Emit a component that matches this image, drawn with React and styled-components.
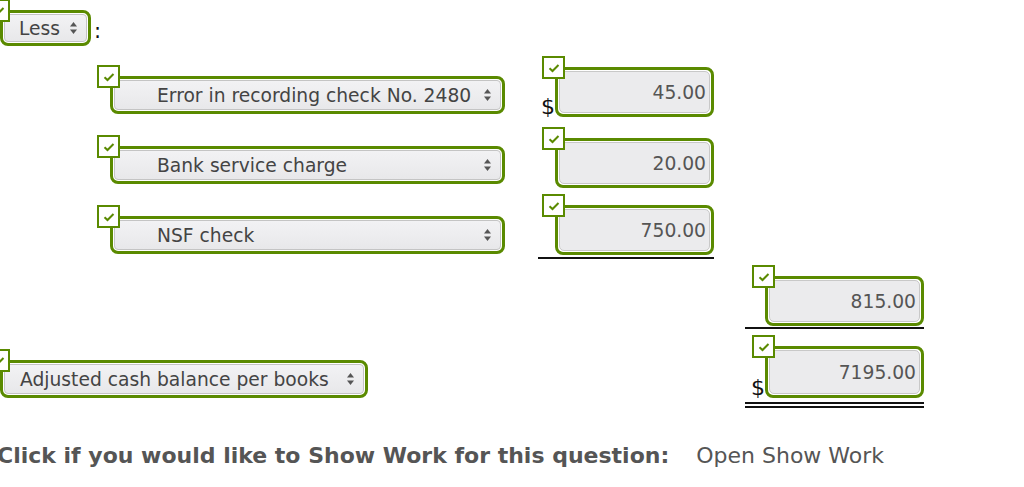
import React from "react";
import styled, { createGlobalStyle } from "styled-components";

const GREEN = "#5a8a00";

const Global = createGlobalStyle`
  html, body { margin: 0; padding: 0; background: #fff; overflow: hidden; }
  body { font-family: "DejaVu Sans", Verdana, sans-serif; color: #444; }
`;

const Page = styled.div`
  width: 1024px;
  height: 487px;
  position: relative;
  overflow: hidden;
  padding-top: 10px;
  box-sizing: border-box;
`;

const Row = styled.div`
  display: grid;
  grid-template-columns: 538px 207px 179px;
  align-items: ${(p) => p.$align || "center"};
  margin-top: ${(p) => p.$top || 0}px;
`;

const LessLine = styled.div`
  display: flex;
  align-items: flex-end;
  gap: 3px;
`;

const Colon = styled.span`
  font-size: 21px;
  color: #111;
  line-height: 1;
  padding-bottom: 4px;
`;

const Field = styled.div`
  position: relative;
  box-sizing: border-box;
  border: 3px solid ${GREEN};
  border-radius: 8px;
  background: #fff;
  padding: 1px;
  width: ${(p) => p.$w}px;
  height: ${(p) => p.$h}px;
  margin-left: ${(p) => p.$ml || 0}px;
  margin-top: ${(p) => p.$mt || 0}px;
  flex: none;
`;

const CheckBox = styled.span`
  position: absolute;
  left: -16px;
  top: -14px;
  width: 23px;
  height: 23px;
  box-sizing: border-box;
  border: 2px solid ${GREEN};
  background: #fff;
  display: flex;
  align-items: center;
  justify-content: center;
  z-index: 2;
`;

const SelectBox = styled.div`
  box-sizing: border-box;
  height: 100%;
  border: 1px solid #c4c4c4;
  border-radius: 4px;
  background: linear-gradient(#f2f2f4, #e8e8ea);
  display: flex;
  align-items: center;
  padding-left: ${(p) => p.$pl}px;
  padding-right: 8px;
  font-size: 18.7px;
  color: #444;
  white-space: nowrap;
`;

const SelectLabel = styled.span`
  flex: 1;
`;

const InputBox = styled.div`
  box-sizing: border-box;
  height: 100%;
  border: 1px solid #c8c8c8;
  border-radius: 5px;
  background: #ebebed;
  display: flex;
  align-items: center;
  justify-content: flex-end;
  padding-right: 3px;
  font-size: 18.7px;
  color: #555;
`;

const AmountCell = styled.div`
  display: flex;
  align-items: flex-end;
  justify-content: flex-end;
  box-sizing: border-box;
  width: ${(p) => p.$w}px;
  padding-bottom: ${(p) => p.$pb || 0}px;
  border-bottom: ${(p) =>
    p.$line === "double" ? "6px double #111" : p.$line === "single" ? "2px solid #111" : "none"};
`;

const Dollar = styled.span`
  font-size: 22px;
  color: #111;
  line-height: 1;
  margin-bottom: -1px;
`;

const Footer = styled.div`
  margin-top: 36px;
  display: flex;
  align-items: center;
  font-size: 22px;
  line-height: 24px;
  color: #555;
  margin-left: -3px;
  white-space: nowrap;
`;

const FooterBold = styled.span`
  font-weight: bold;
  margin-right: 27px;
`;

const FooterLink = styled.span``;

const Check = () => (
  <CheckBox>
    <svg width="12" height="10" viewBox="0 0 12 10">
      <path d="M1.5 5.2 L4.5 8 L10.5 2" fill="none" stroke={GREEN} strokeWidth="2" />
    </svg>
  </CheckBox>
);

const Arrows = () => (
  <svg width="9" height="14" viewBox="0 0 9 14">
    <path d="M4.5 1 L8 5.5 H1 Z" fill="#555" />
    <path d="M4.5 13 L8 8.5 H1 Z" fill="#555" />
  </svg>
);

const Select = ({ label, w, h = 38, pl, ml, mt }) => (
  <Field $w={w} $h={h} $ml={ml} $mt={mt}>
    <Check />
    <SelectBox $pl={pl}>
      <SelectLabel>{label}</SelectLabel>
      <Arrows />
    </SelectBox>
  </Field>
);

const Amount = ({ value, dollar, w, line, pb, h = 50 }) => (
  <AmountCell $w={w} $line={line} $pb={pb}>
    {dollar && <Dollar>$</Dollar>}
    <Field $w={159} $h={h}>
      <Check />
      <InputBox>{value}</InputBox>
    </Field>
  </AmountCell>
);

export default function App() {
  return (
    <Page>
      <Global />
      <LessLine>
        <Select label="Less" w={91} h={36} pl={14} />
        <Colon>:</Colon>
      </LessLine>

      <Row $top={21}>
        <Select label="Error in recording check No. 2480" w={395} pl={42} ml={110} mt={6} />
        <Amount value="45.00" dollar w={176} />
      </Row>

      <Row $top={21}>
        <Select label="Bank service charge" w={395} pl={42} ml={110} mt={4} />
        <Amount value="20.00" w={176} />
      </Row>

      <Row $top={17}>
        <Select label="NSF check" w={395} pl={42} ml={110} mt={6} />
        <Amount value="750.00" w={176} line="single" pb={2} />
      </Row>

      <Row $top={17}>
        <span />
        <span />
        <Amount value="815.00" w={179} line="single" pb={1} />
      </Row>

      <Row $top={17} $align="start">
        <Select label="Adjusted cash balance per books" w={368} pl={15} mt={14} />
        <span />
        <Amount value="7195.00" dollar w={179} line="double" pb={4} h={52} />
      </Row>

      <Footer>
        <FooterBold>Click if you would like to Show Work for this question:</FooterBold>
        <FooterLink>Open Show Work</FooterLink>
      </Footer>
    </Page>
  );
}
